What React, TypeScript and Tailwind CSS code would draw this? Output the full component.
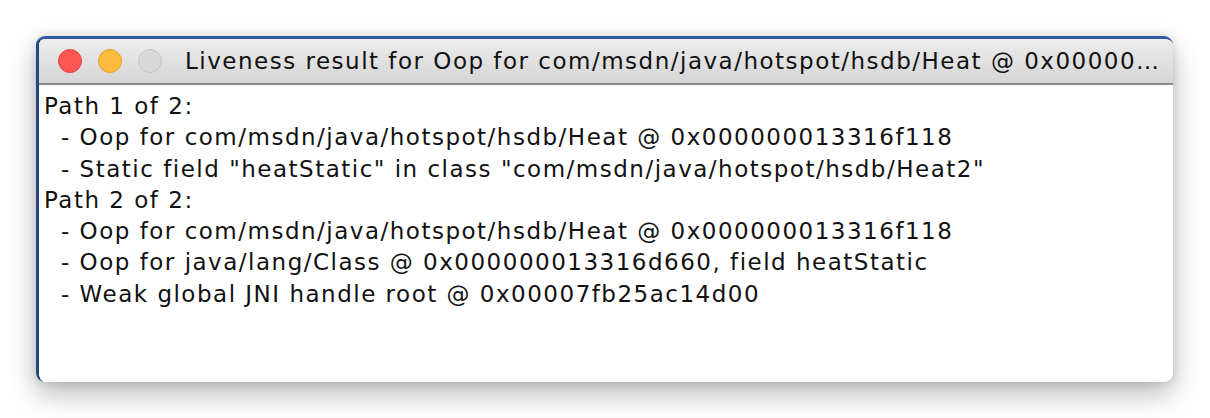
const lines: { text: string; indent: boolean }[] = [
  { text: 'Path 1 of 2:', indent: false },
  { text: '- Oop for com/msdn/java/hotspot/hsdb/Heat @ 0x000000013316f118', indent: true },
  { text: '- Static field "heatStatic" in class "com/msdn/java/hotspot/hsdb/Heat2"', indent: true },
  { text: 'Path 2 of 2:', indent: false },
  { text: '- Oop for com/msdn/java/hotspot/hsdb/Heat @ 0x000000013316f118', indent: true },
  { text: '- Oop for java/lang/Class @ 0x000000013316d660, field heatStatic', indent: true },
  { text: '- Weak global JNI handle root @ 0x00007fb25ac14d00', indent: true },
]

export default function App() {
  return (
    <div
      className="w-[1210px] h-[418px] bg-white pt-[36px] pl-[36px]"
      style={{ fontFamily: '"DejaVu Sans", "Liberation Sans", sans-serif' }}
    >
      <div className="flex h-[346px] w-[1137px] flex-col overflow-hidden rounded-[9px] border-l-[3px] border-t-[3px] border-l-[#27477f] border-t-[#2f5aa0] shadow-[0_12px_28px_rgba(0,0,0,0.28),0_0_10px_rgba(0,0,0,0.12)]">
        {/* Title bar */}
        <div className="flex h-[46px] shrink-0 items-center border-b-2 border-[#8c8c8c] bg-gradient-to-b from-[#ededed] to-[#d5d5d5] pl-[19px] pr-[8px]">
          <div className="flex shrink-0 items-center gap-[16px]">
            <span className="h-[24px] w-[24px] rounded-full border border-[#e0443e] bg-[#fc5753]" />
            <span className="h-[24px] w-[24px] rounded-full border border-[#dea123] bg-[#fdbc40]" />
            <span className="h-[24px] w-[24px] rounded-full border border-[#c4c4c4] bg-[#d8d8d8]" />
          </div>
          <div className="ml-[23px] whitespace-nowrap text-[23px] tracking-[1.5px] text-[#111]">
            Liveness result for Oop for com/msdn/java/hotspot/hsdb/Heat @ 0x00000…
          </div>
        </div>

        {/* Content */}
        <div className="flex-1 bg-white pl-[5px] pt-[6px] text-[23px] leading-[31.3px] tracking-[1.5px] text-[#111]">
          {lines.map((l, i) => (
            <div key={i} className={l.indent ? 'pl-[17px] whitespace-pre' : 'whitespace-pre'}>
              {l.text}
            </div>
          ))}
        </div>
      </div>
    </div>
  )
}
